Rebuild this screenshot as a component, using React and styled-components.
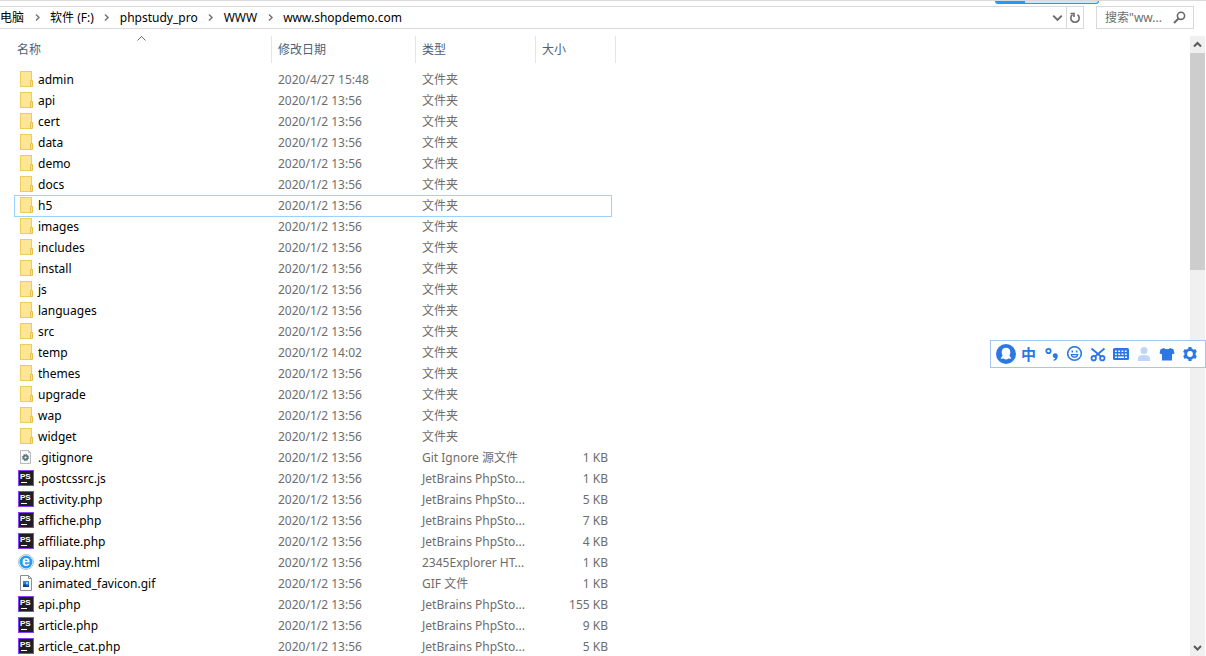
import React, { useState } from 'react'
import styled, { createGlobalStyle, css } from 'styled-components'

const GlobalStyle = createGlobalStyle`
  * {
    box-sizing: border-box;
  }

  body {
    margin: 0;
    overflow: hidden;
    background: #fff;
    color: #000;
    font-family: "Noto Sans", "Noto Sans CJK SC", sans-serif;
    font-size: 12px;
    line-height: 20px;
  }

  button, input {
    font: inherit;
    color: inherit;
    margin: 0;
    padding: 0;
    border: none;
    background: none;
  }

  svg {
    display: block;
    flex: none;
  }
`

const Explorer = styled.div`
  position: relative;
  display: flex;
  flex-direction: column;
  height: 100vh;
  overflow: hidden;
  border-top: 1px solid #dadada;
`

const TransferBar = styled.div`
  position: absolute;
  top: 0;
  right: 107px;
  width: 104px;
  height: 3px;
  border: 1px solid #1e9bff;
  border-top: none;
  border-radius: 0 0 4px 4px;
  background: linear-gradient(to right, #1e9bff 29px, #c5e9ff 29px);
`

const TopBar = styled.div`
  display: flex;
  gap: 12px;
  padding: 5px 12px 7px 0;
`

const AddressBar = styled.nav`
  flex: 1;
  display: flex;
  align-items: center;
  height: 23px;
  border: 1px solid #d9d9d9;
  border-left: none;
`

const Crumb = styled.button`
  white-space: nowrap;
`

const CrumbArrow = styled.span`
  display: flex;
  justify-content: center;
  width: 26px;
`

const AddressButton = styled.button`
  display: flex;
  align-items: center;
  justify-content: center;
  width: 17px;
  height: 21px;
  margin-left: ${({ $first }) => ($first ? 'auto' : '0')};
  border-left: ${({ $divided }) => ($divided ? '1px solid #d9d9d9' : 'none')};
`

const SearchBox = styled.label`
  display: flex;
  align-items: center;
  width: 98px;
  height: 23px;
  padding: 0 7px 0 8px;
  border: 1px solid #d9d9d9;
`

const SearchInput = styled.input`
  flex: 1;
  min-width: 0;
  outline: none;

  &::placeholder {
    color: #6d6d6d;
    opacity: 1;
  }
`

const Body = styled.main`
  flex: 1;
  display: flex;
  min-height: 0;
`

const FilePane = styled.div`
  flex: 1;
  overflow: hidden;
  padding-left: 14px;
`

const FileTable = styled.table`
  table-layout: fixed;
  width: 602px;
  border-collapse: separate;
  border-spacing: 0;

  thead::after {
    content: "";
    display: block;
    height: 6px;
  }
`

const HeadCell = styled.th`
  position: relative;
  width: ${({ $width }) => $width}px;
  height: 27px;
  padding: 0 0 0 ${({ $first }) => ($first ? '3px' : '6px')};
  border-right: 1px solid #e5e5e5;
  color: #4c607a;
  font-weight: 400;
  text-align: left;
`

const SortMark = styled.svg`
  position: absolute;
  top: 0;
  left: 50%;
  margin-left: -6px;
`

const Row = styled.tr`
  position: relative;

  ${({ $focused }) => $focused && css`
    &::after {
      content: "";
      position: absolute;
      inset: 0 4px -1px 0;
      border: 1px solid #99d1ff;
      pointer-events: none;
    }
  `}
`

const Cell = styled.td`
  height: 21px;
  padding: 0 8px 0 6px;
  color: #6d6d6d;
  line-height: 21px;
  text-align: ${({ $right }) => ($right ? 'right' : 'left')};
  white-space: nowrap;
  overflow: hidden;
`

const NameCell = styled(Cell)`
  padding: 0 0 0 4px;
  color: #000;
`

const FileName = styled.span`
  display: flex;
  align-items: flex-start;
  gap: 4px;
`

const FileIcon = styled.svg`
  margin: 2px 0;
`

const ScrollBar = styled.div`
  display: flex;
  flex-direction: column;
  width: 16px;
  border-right: 1px solid #fff;
  background: #f0f0f0;
`

const ScrollButton = styled.button`
  display: flex;
  align-items: center;
  justify-content: center;
  height: 17px;
`

const ScrollTrack = styled.div`
  flex: 1;
`

const ScrollThumb = styled.div`
  height: 37%;
  background: #cdcdcd;
`

const InputToolbar = styled.div`
  position: absolute;
  top: 339px;
  right: 0;
  display: flex;
  align-items: center;
  height: 28px;
  padding: 0 4px 0 3px;
  border: 1px solid #a6c4f2;
  background: #fff;
`

const ToolButton = styled.button`
  display: flex;
  align-items: center;
  justify-content: center;
  width: 23px;
  height: 26px;
  color: #2b78e4;
  font-size: ${({ $glyph }) => ($glyph ? '15px' : '12px')};
  font-weight: 700;
`

const folders = [
  'admin', 'api', 'cert', 'data', 'demo', 'docs', 'h5', 'images', 'includes',
  'install', 'js', 'languages', 'src', 'temp', 'themes', 'upgrade', 'wap', 'widget',
]
const folderDates = { admin: '2020/4/27 15:48', temp: '2020/1/2 14:02' }

const files = [
  { name: '.gitignore', kind: 'config', type: 'Git Ignore 源文件', size: '1 KB' },
  { name: '.postcssrc.js', kind: 'storm', size: '1 KB' },
  { name: 'activity.php', kind: 'storm', size: '5 KB' },
  { name: 'affiche.php', kind: 'storm', size: '7 KB' },
  { name: 'affiliate.php', kind: 'storm', size: '4 KB' },
  { name: 'alipay.html', kind: 'browser', type: '2345Explorer HT...', size: '1 KB' },
  { name: 'animated_favicon.gif', kind: 'image', type: 'GIF 文件', size: '1 KB' },
  { name: 'api.php', kind: 'storm', size: '155 KB' },
  { name: 'article.php', kind: 'storm', size: '9 KB' },
  { name: 'article_cat.php', kind: 'storm', size: '5 KB' },
]

const rows = [
  ...folders.map(name => ({
    name,
    kind: 'folder',
    date: folderDates[name] || '2020/1/2 13:56',
    type: '文件夹',
    size: '',
  })),
  ...files.map(file => ({ date: '2020/1/2 13:56', type: 'JetBrains PhpSto...', ...file })),
]

const fileIcons = {
  folder: (
    <>
      <rect x="2.5" y="0.5" width="11" height="15" fill="#ffe694" stroke="#f0cd58" />
      <path d="M12.5 9.5h2v6h-2z" fill="#ffe694" stroke="#e6c04a" />
    </>
  ),
  config: (
    <>
      <path d="M2.5 1.5h8l2 2v11h-10z" fill="#fafafa" stroke="#b9b9b9" />
      <path d="M10.5 1.5v2h2" fill="none" stroke="#b9b9b9" />
      <circle cx="7.5" cy="8.5" r="2" fill="none" stroke="#5d7780" strokeWidth="1.8" />
      <circle cx="7.5" cy="8.5" r="3.2" fill="none" stroke="#5d7780" strokeWidth="1" strokeDasharray="1.3 1.2" />
    </>
  ),
  storm: (
    <>
      <rect width="16" height="16" fill="#8a3ffc" />
      <rect x="1" y="1" width="14" height="14" fill="#1f1f23" />
      <text x="2" y="9" fill="#fff" fontFamily="Liberation Sans, sans-serif" fontSize="8" fontWeight="700">PS</text>
      <path d="M3 12.5h6" stroke="#fff" />
    </>
  ),
  browser: (
    <>
      <circle cx="8" cy="8" r="7.5" fill="#fff" stroke="#a9c3da" />
      <circle cx="8" cy="8" r="6.5" fill="#279af2" />
      <text x="8" y="12" fill="#fff" fontFamily="Liberation Sans, sans-serif" fontSize="14" fontWeight="700" textAnchor="middle">e</text>
    </>
  ),
  image: (
    <>
      <path d="M2.5 0.5h8l3 3v12h-11z" fill="#fff" stroke="#8f8f8f" />
      <path d="M10.5 0.5v3h3" fill="none" stroke="#8f8f8f" />
      <rect x="5" y="6" width="6" height="6" fill="#2a7fd4" />
      <path d="M5 12v-2l2-1 2 2 2-1v2z" fill="#123f80" />
      <rect x="8" y="7" width="2" height="2" fill="#8fd0ff" />
    </>
  ),
}

const tools = [
  {
    label: '用户',
    size: 20,
    icon: (
      <>
        <circle cx="10" cy="10" r="10" fill="currentColor" />
        <path d="M10 3.700c-3 0-4.300 2-4.300 4.500 0 1.600.4 2.500 1 3.400L4.600 14.400c1.100.4 2.200.2 3 .1.700.6 1.500.9 2.400.9s1.700-.3 2.400-.9c.8.1 1.900.3 3-.1l-2.100-2.800c.6-.9 1-1.800 1-3.400 0-2.500-1.300-4.500-4.300-4.500z" fill="#fff" />
      </>
    ),
  },
  { label: '中文', glyph: '中' },
  {
    label: '标点',
    icon: (
      <>
        <circle cx="4.500" cy="5" r="2.200" fill="none" stroke="currentColor" strokeWidth="1.800" />
        <path d="M8.800 10a2.500 2.500 0 0 1 5-.3c0 2.700-1.500 4.700-4 5.300l-.4-1.300c1-.3 1.700-.8 2-1.600a2.400 2.400 0 0 1-2.600-2.100z" fill="currentColor" />
      </>
    ),
  },
  {
    label: '表情',
    icon: (
      <g fill="none" stroke="currentColor" strokeWidth="1.6">
        <circle cx="7.500" cy="7.500" r="6.800" />
        <path d="M4.300 8.600c.5 3.400 5.900 3.400 6.400 0z" strokeWidth="1.300" />
        <path d="M5.300 4.500v2M9.700 4.500v2" />
      </g>
    ),
  },
  {
    label: '截图',
    icon: (
      <g fill="none" stroke="currentColor" strokeWidth="1.8">
        <path d="M1.500 2.500l9.500 8M14.500 2.500L5 10.500" />
        <circle cx="3.700" cy="12.200" r="2.200" />
        <circle cx="12.300" cy="12.200" r="2.200" />
      </g>
    ),
  },
  {
    label: '键盘',
    icon: (
      <>
        <rect x="0" y="2" width="16" height="12" rx="1.500" fill="currentColor" />
        <g stroke="#fff" strokeWidth="1.500">
          <path d="M2 5.200h12" strokeDasharray="1.800 1.500" />
          <path d="M2 8.200h12" strokeDasharray="1.800 1.500" />
          <path d="M2 11.200h2M5 11.200h6M12 11.200h2" />
        </g>
      </>
    ),
  },
  {
    label: '账号',
    icon: (
      <g fill="#bfd6f8">
        <circle cx="8" cy="4.500" r="3.500" />
        <path d="M2 15v-2.500c0-2 2-3.500 6-3.500s6 1.500 6 3.500V15z" />
      </g>
    ),
  },
  {
    label: '皮肤',
    icon: (
      <path d="M5 2c1 1.600 5 1.600 6 0l3.500 1.200L15.500 7.500l-2.500.7v6.300H3V8.200L.5 7.500l1-4.300z" fill="currentColor" />
    ),
  },
  {
    label: '设置',
    icon: (
      <g fill="none" stroke="currentColor">
        <circle cx="8" cy="8" r="4.300" strokeWidth="2.800" />
        <path d="M8 1v3M8 12v3M1.900 4.500l2.600 1.500M11.500 10l2.600 1.500M1.900 11.500l2.600-1.500M11.500 6l2.600-1.500" strokeWidth="3.200" />
      </g>
    ),
  },
]

function Chevron({ dir, size = 9, color = '#5a5a5a', width = 2 }) {
  const paths = { up: 'M1 6.500l3.500-3.500L8 6.500', down: 'M1 3l3.500 3.500L8 3', right: 'M3 1.500l3 3-3 3' }
  return (
    <svg width={size} height={size} viewBox="0 0 9 9" fill="none" stroke={color} strokeWidth={width}>
      <path d={paths[dir]} />
    </svg>
  )
}

function Address() {
  const crumbs = ['电脑', '软件 (F:)', 'phpstudy_pro', 'WWW', 'www.shopdemo.com']

  return (
    <AddressBar aria-label="地址">
      {crumbs.map((crumb, i) => (
        <React.Fragment key={crumb}>
          {i > 0 && <CrumbArrow><Chevron dir="right" color="#777" width={1.5} /></CrumbArrow>}
          <Crumb>{crumb}</Crumb>
        </React.Fragment>
      ))}
      <AddressButton $first aria-label="展开">
        <Chevron dir="down" size={11} color="#6a6a6a" width={1.6} />
      </AddressButton>
      <AddressButton $divided aria-label="刷新">
        <svg width="12" height="12" viewBox="0 0 12 12" fill="none" stroke="#6a6a6a" strokeWidth="1.6">
          <path d="M8.500 2.700A4.200 4.200 0 1 1 3.500 2.700" />
          <path d="M1.500 1.500H5v3.500" />
        </svg>
      </AddressButton>
    </AddressBar>
  )
}

function FileRow({ file, focused, onFocus }) {
  return (
    <Row $focused={focused} onClick={onFocus}>
      <NameCell>
        <FileName>
          <FileIcon width="16" height="16" viewBox="0 0 16 16">{fileIcons[file.kind]}</FileIcon>
          {file.name}
        </FileName>
      </NameCell>
      <Cell>{file.date}</Cell>
      <Cell>{file.type}</Cell>
      <Cell $right>{file.size}</Cell>
    </Row>
  )
}

export default function App() {
  const [focused, setFocused] = useState('h5')
  const [query, setQuery] = useState('')

  return (
    <Explorer>
      <GlobalStyle />
      <TransferBar />
      <TopBar>
        <Address />
        <SearchBox>
          <SearchInput
            type="text"
            aria-label="搜索"
            placeholder={'搜索"ww...'}
            value={query}
            onChange={e => setQuery(e.target.value)}
          />
          <svg width="13" height="13" viewBox="0 0 13 13" fill="none" stroke="#6a6a6a" strokeWidth="1.6">
            <circle cx="8" cy="4.800" r="3.600" />
            <path d="M5.500 7.500L1 12" strokeWidth="2" />
          </svg>
        </SearchBox>
      </TopBar>
      <Body>
        <FilePane>
          <FileTable>
            <thead>
              <tr>
                <HeadCell $first $width={258}>
                  名称
                  <SortMark width="9" height="5" viewBox="0 0 9 5" fill="none" stroke="#6a6a6a">
                    <path d="M0.500 4.500l4-4 4 4" />
                  </SortMark>
                </HeadCell>
                <HeadCell $width={144}>修改日期</HeadCell>
                <HeadCell $width={120}>类型</HeadCell>
                <HeadCell $width={80}>大小</HeadCell>
              </tr>
            </thead>
            <tbody>
              {rows.map(file => (
                <FileRow
                  key={file.name}
                  file={file}
                  focused={focused === file.name}
                  onFocus={() => setFocused(file.name)}
                />
              ))}
            </tbody>
          </FileTable>
        </FilePane>
        <ScrollBar>
          <ScrollButton aria-label="向上滚动"><Chevron dir="up" /></ScrollButton>
          <ScrollTrack><ScrollThumb /></ScrollTrack>
          <ScrollButton aria-label="向下滚动"><Chevron dir="down" /></ScrollButton>
        </ScrollBar>
      </Body>
      <InputToolbar>
        {tools.map(({ label, glyph, icon, size = 16 }) => (
          <ToolButton key={label} aria-label={label} $glyph={glyph}>
            {glyph || <svg width={size} height={size} viewBox={`0 0 ${size} ${size}`}>{icon}</svg>}
          </ToolButton>
        ))}
      </InputToolbar>
    </Explorer>
  )
}
